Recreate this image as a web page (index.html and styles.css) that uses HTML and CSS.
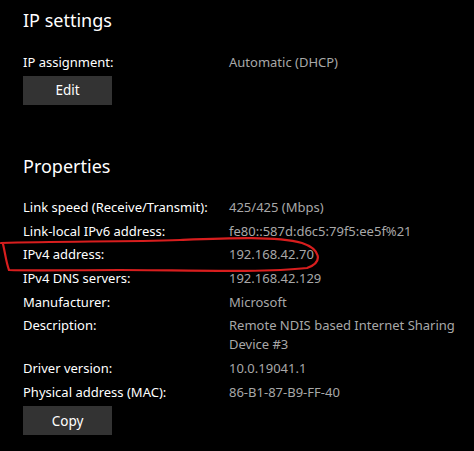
FILE: index.html
```html
<!DOCTYPE html>
<html>
<head>
<meta charset="utf-8">
<link rel="stylesheet" href="styles.css">
</head>
<body>
<div class="page">
  <h2 class="heading">IP settings</h2>
  <div class="props first">
    <div class="row"><span class="label">IP assignment:</span><span class="value">Automatic (DHCP)</span></div>
  </div>
  <button class="btn">Edit</button>

  <h2 class="heading second">Properties</h2>
  <div class="props first">
    <div class="row"><span class="label">Link speed (Receive/Transmit):</span><span class="value">425/425 (Mbps)</span></div>
    <div class="row"><span class="label">Link-local IPv6 address:</span><span class="value">fe80::587d:d6c5:79f5:ee5f%21</span></div>
    <div class="row"><span class="label">IPv4 address:</span><span class="value">192.168.42.70</span></div>
    <div class="row"><span class="label">IPv4 DNS servers:</span><span class="value">192.168.42.129</span></div>
    <div class="row"><span class="label">Manufacturer:</span><span class="value">Microsoft</span></div>
    <div class="row"><span class="label">Description:</span><span class="value">Remote NDIS based Internet Sharing Device #3</span></div>
    <div class="row"><span class="label">Driver version:</span><span class="value">10.0.19041.1</span></div>
    <div class="row"><span class="label">Physical address (MAC):</span><span class="value">86-B1-87-B9-FF-40</span></div>
  </div>
  <button class="btn copy">Copy</button>
</div>
<svg class="scribble" width="474" height="451" viewBox="0 0 474 451">
  <path d="M 1 243 C 60 241, 120 242, 180 240 C 230 238, 276 236, 302 243 C 320 249, 324 262, 307 268 C 262 273, 180 270, 120 270 C 70 270, 30 271, 9 270 C 6 262, 5 252, 3 244" fill="none" stroke="#d81e1e" stroke-width="2.2" stroke-linecap="round"/>
</svg>
</body>
</html>
```
FILE: styles.css
```css
html, body {
  margin: 0;
  padding: 0;
  background: #000;
}
body {
  position: relative;
  width: 474px;
  height: 451px;
  overflow: hidden;
  font-family: "Noto Sans", "Open Sans", sans-serif;
  color: #fff;
}
.page {
  padding: 6px 0 0 23px;
}
.heading {
  margin: 0;
  font-size: 18px;
  line-height: 28px;
  font-weight: 400;
  color: #fff;
}
.heading.second {
  margin-top: 47px;
}
.props {
  display: flex;
  flex-direction: column;
  gap: 4.7px;
  margin-top: 18.5px;
}
.row {
  display: flex;
  font-size: 13px;
  line-height: 19px;
}
.label {
  width: 206px;
  flex: none;
  color: #fff;
}
.value {
  color: #a8a8a8;
  width: 240px;
}
.btn {
  display: block;
  margin-top: 4px;
  width: 89px;
  height: 29px;
  border: none;
  background: #333;
  color: #fff;
  font-family: inherit;
  font-size: 13.5px;
  padding: 0;
}
.btn.copy {
  margin-top: 4.5px;
}
.scribble {
  position: absolute;
  left: 0;
  top: 0;
  pointer-events: none;
}
```
